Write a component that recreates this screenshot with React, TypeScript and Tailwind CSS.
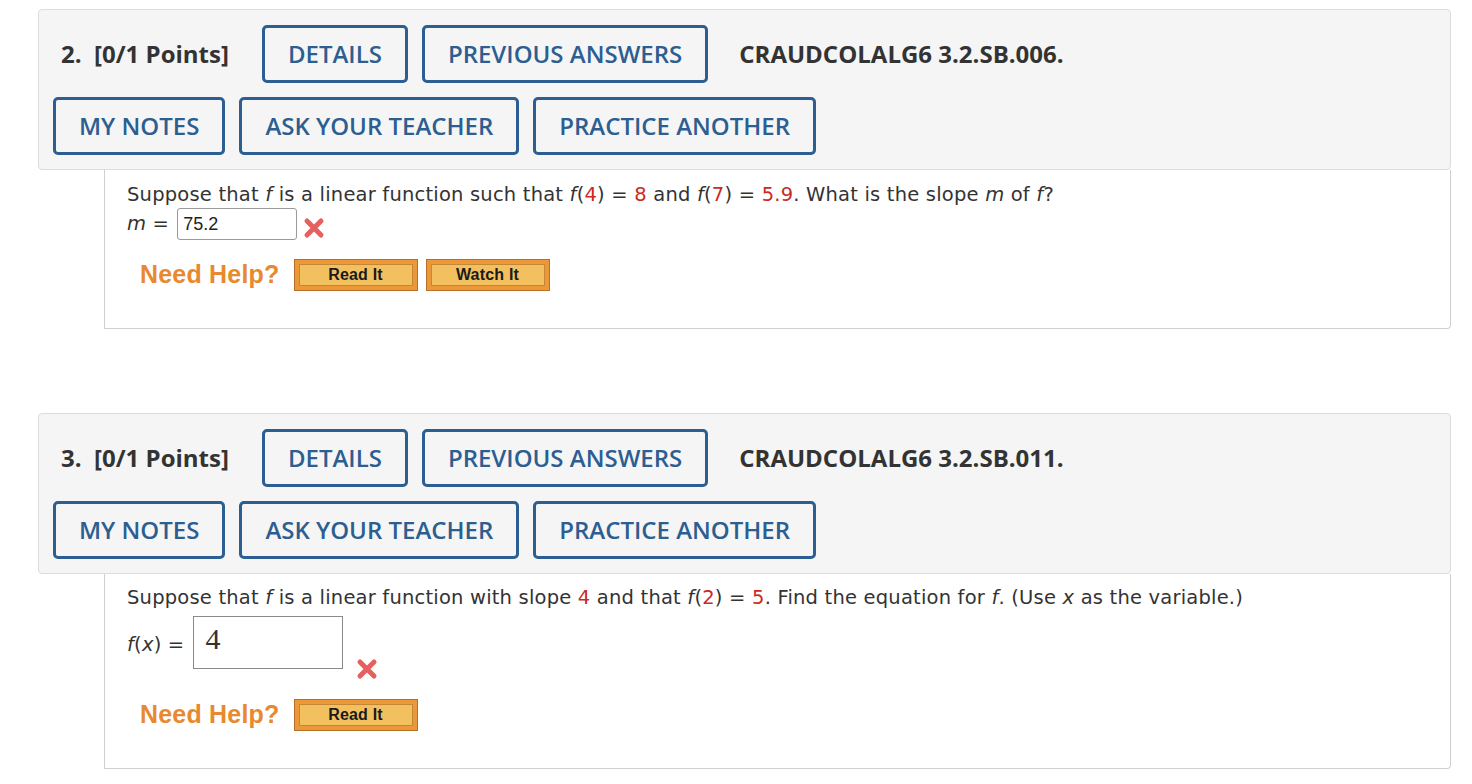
import React from "react";

const blueBtn =
  "h-[58px] px-[23px] flex items-center border-[3px] border-[#2c5e91] rounded-[5px] text-[#2c5e91] text-[24px] font-semibold bg-transparent";

function XMark() {
  return (
    <svg width="22" height="22" viewBox="0 0 22 22">
      <path d="M4 4 L18 18 M18 4 L4 18" stroke="#e6605f" strokeWidth="5" strokeLinecap="round" />
    </svg>
  );
}

function HelpButton({ label }: { label: string }) {
  return (
    <div className="w-[124px] h-[32px] border border-[#b56f2a] bg-[#ec9838] p-[4px]">
      <div className="h-full border border-[#c58736] bg-[#f3c060] flex items-center justify-center text-[16px] font-bold text-[#1a1a1a] font-['Liberation_Sans',Arial,sans-serif]">
        {label}
      </div>
    </div>
  );
}

function Header({ num, code }: { num: number; code: string }) {
  return (
    <div className="bg-[#f5f5f5] border border-[#dcdcdc] rounded-[4px] pt-[15px] pb-[14px] pl-[14px] font-['Open_Sans',sans-serif]">
      <div className="flex items-center">
        <div className="ml-[8px] text-[24px] font-bold text-[#333] whitespace-pre">{`${num}.  [0/1 Points]`}</div>
        <button className={`${blueBtn} ml-[33px]`}>DETAILS</button>
        <button className={`${blueBtn} ml-[14px]`}>PREVIOUS ANSWERS</button>
        <div className="ml-[31px] text-[24px] font-bold text-[#333]">{code}</div>
      </div>
      <div className="flex items-center gap-[14px] mt-[14px]">
        <button className={blueBtn}>MY NOTES</button>
        <button className={blueBtn}>ASK YOUR TEACHER</button>
        <button className={blueBtn}>PRACTICE ANOTHER</button>
      </div>
    </div>
  );
}

const R = ({ children }: { children: React.ReactNode }) => <span className="text-[#cc2a24]">{children}</span>;
const I = ({ children }: { children: React.ReactNode }) => <i>{children}</i>;

function NeedHelp({ watch }: { watch?: boolean }) {
  return (
    <div className="flex items-center ml-[13px]">
      <span className="text-[25px] font-bold text-[#e8892f] font-['Liberation_Sans',Arial,sans-serif] mr-[14px]">Need Help?</span>
      <HelpButton label="Read It" />
      {watch && (
        <div className="ml-[8px]">
          <HelpButton label="Watch It" />
        </div>
      )}
    </div>
  );
}

export default function App() {
  return (
    <div className="min-h-screen bg-white pt-[9px] pl-[38px] pr-[21px] text-[#333]">
      <Header num={2} code="CRAUDCOLALG6 3.2.SB.006." />
      <div className="ml-[66px] border-x border-b border-[#cfcfcf] rounded-br-[4px] pl-[22px] pt-[13px] h-[159px] font-['DejaVu_Sans',Verdana,sans-serif] text-[19.5px] tracking-[0.2px]">
        <div className="leading-[24px]">
          Suppose that <I>f</I> is a linear function such that <I>f</I>(<R>4</R>) = <R>8</R> and <I>f</I>(<R>7</R>) = <R>5.9</R>. What is the slope <I>m</I> of <I>f</I>?
        </div>
        <div className="flex items-center h-[32px] mt-[1px]">
          <span><I>m</I> =</span>
          <div className="ml-[8px] w-[120px] h-[32px] border border-[#9a9a9a] rounded-[3px] bg-white flex items-center pl-[5px] text-[18px] tracking-normal font-['Liberation_Sans',Arial,sans-serif] text-[#222]">
            75.2
          </div>
          <div className="ml-[6px] mt-[8px]">
            <XMark />
          </div>
        </div>
        <div className="mt-[16px]">
          <NeedHelp watch />
        </div>
      </div>

      <div className="h-[84px]" />

      <Header num={3} code="CRAUDCOLALG6 3.2.SB.011." />
      <div className="ml-[66px] border-x border-b border-[#cfcfcf] rounded-br-[4px] pl-[22px] pt-[12px] h-[195px] font-['DejaVu_Sans',Verdana,sans-serif] text-[19.5px] tracking-[0.2px]">
        <div className="leading-[24px]">
          Suppose that <I>f</I> is a linear function with slope <R>4</R> and that <I>f</I>(<R>2</R>) = <R>5</R>. Find the equation for <I>f</I>. (Use <I>x</I> as the variable.)
        </div>
        <div className="flex items-start mt-[6px]">
          <span className="mt-[14px]"><I>f</I>(<I>x</I>) =</span>
          <div className="ml-[9px] w-[150px] h-[53px] border border-[#8a8a8a] bg-white pl-[11px] pt-[6px] text-[30px] leading-[32px] tracking-normal font-['Liberation_Serif','Times_New_Roman',serif] text-[#333]">
            4
          </div>
          <div className="ml-[13px] mt-[42px]">
            <XMark />
          </div>
        </div>
        <div className="mt-[16px]">
          <NeedHelp />
        </div>
      </div>
    </div>
  );
}
